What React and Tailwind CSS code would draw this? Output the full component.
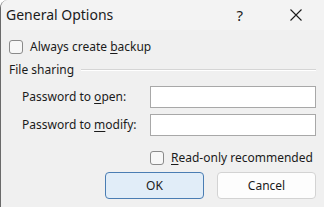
const font = { fontFamily: '"Noto Sans", "Liberation Sans", sans-serif' }

const Box = ({ className = '' }) => (
  <div className={`w-[14px] h-[14px] shrink-0 rounded-[3px] border border-[#8a8a8a] bg-[#f7f7f7] ${className}`}></div>
)

const App = () => {
  return (
    <div
      className="w-[324px] h-[207px] bg-[#f0f0f0] border-l border-[#6a6a6a] rounded-tl-[8px] overflow-hidden text-[#1b1b1b] text-[12px] leading-[14px]"
      style={font}
    >
      {/* title bar */}
      <div className="h-[30px] bg-[#f3f3f3] flex items-center pl-[5px]">
        <span className="text-[14px] leading-[18px]">General Options</span>
        <span className="ml-auto mr-[47px] text-[15px] leading-[18px]">?</span>
        <svg width="12" height="12" viewBox="0 0 12 12" className="mr-[22px]">
          <path d="M0.5 0.5 L11.5 11.5 M11.5 0.5 L0.5 11.5" stroke="#1b1b1b" strokeWidth="1.1" />
        </svg>
      </div>

      <div className="pl-[8px] pr-[8px]">
        <div className="mt-[10px] flex items-center gap-[7px] h-[14px]">
          <Box />
          <span>Always create <u className="underline-offset-2">b</u>ackup</span>
        </div>

        <div className="mt-[8px] h-[16px] flex items-center gap-[7px]">
          <span>File sharing</span>
          <div className="flex-1 border-t border-[#d5d5d5] border-b-white border-b"></div>
        </div>

        <div className="mt-[8px] flex items-center h-[22px]">
          <span className="pl-[13px] w-[141px]">Password to <u className="underline-offset-2">o</u>pen:</span>
          <div className="w-[167px] h-[22px] bg-white border border-[#a8a8a8]"></div>
        </div>

        <div className="mt-[6px] flex items-center h-[22px]">
          <span className="pl-[13px] w-[141px]">Password to <u className="underline-offset-2">m</u>odify:</span>
          <div className="w-[167px] h-[22px] bg-white border border-[#a8a8a8]"></div>
        </div>

        <div className="mt-[15px] flex items-center gap-[7px] h-[14px] pl-[141px]">
          <Box />
          <span><u className="underline-offset-2">R</u>ead-only recommended</span>
        </div>

        <div className="mt-[7px] flex justify-end gap-[13px]">
          <button className="w-[99px] h-[27px] rounded-[4px] border border-[#4a7db3] bg-[#e1edf8]">OK</button>
          <button className="w-[99px] h-[27px] rounded-[4px] border border-[#d3d3d3] bg-[#fdfdfd]">Cancel</button>
        </div>
      </div>
    </div>
  )
}

export default App
